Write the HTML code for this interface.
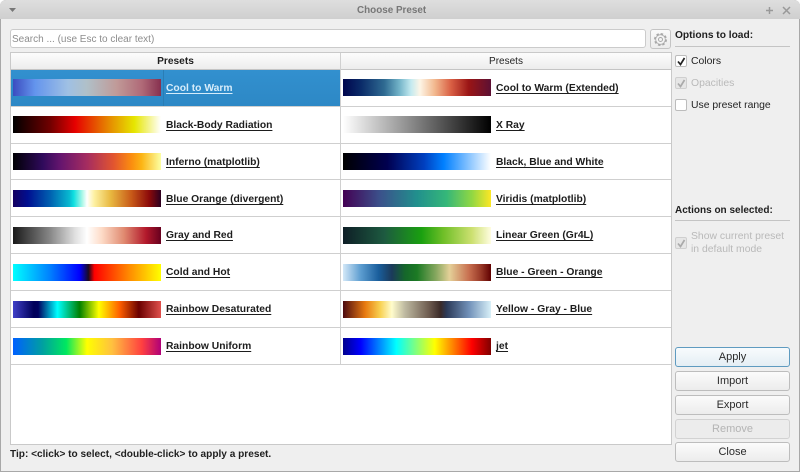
<!DOCTYPE html>
<html><head><meta charset="utf-8"><style>
html,body{margin:0;padding:0;width:800px;height:472px;overflow:hidden;background:#fff}
*{box-sizing:border-box}
body{font-family:"Liberation Sans","Noto Sans CJK SC",sans-serif;font-size:11px;color:#232323}
div{position:absolute}
.win{left:0;top:0;width:800px;height:472px;background:#efefef;border:1px solid #a8a8a8;border-top-color:#8f8f8f;border-radius:6px 6px 0 0;overflow:hidden}
.title{left:0;top:0;width:800px;height:19px;background:linear-gradient(#dedede,#cfcfcf)}
.tt{left:357px;top:4px;font-weight:bold;font-size:9.9px;color:#777;line-height:14px;white-space:nowrap}
.line{background:#cfcfcf;height:1px}
.bar{width:148px;height:17px}
.l{left:13px}.r{left:343px}
.n{font-size:10.3px;font-weight:bold;text-decoration:underline;text-decoration-thickness:1px;text-underline-offset:2px;line-height:14px;white-space:nowrap;color:#1d1d1d}
.nl{left:166px}.nr{left:496px}
.btn{left:675px;width:115px;height:20px;border:1px solid #bdbdbd;border-radius:3px;background:linear-gradient(#fbfbfb,#ececec);text-align:center;line-height:18px;font-size:11px;color:#2a2a2a}
.cb{left:675px;width:12px;height:12px;border:1px solid #bcbcbc;border-radius:2px;background:#fff}
.lab{left:691px;font-size:10.4px;line-height:14px;white-space:nowrap}
.dis{color:#b9b9b9}
.h{font-size:10.2px;font-weight:bold;line-height:14px;white-space:nowrap;color:#1f1f1f}
svg{position:absolute;overflow:visible}
</style></head><body>
<div class="win"></div>
<div class="title" style="border-radius:6px 6px 0 0"></div>
<div class="tt">Choose Preset</div>
<svg style="left:9px;top:8px" width="8" height="5"><path d="M0 0H7L3.500 4Z" fill="#777"/></svg>
<svg style="left:765px;top:6px" width="30" height="9"><path d="M1 4.500H8M4.500 1V8" stroke="#999" stroke-width="1.500" fill="none"/><path d="M18 1L25 8M25 1L18 8" stroke="#999" stroke-width="1.500" fill="none"/></svg>

<div style="left:10px;top:29px;width:636px;height:19px;background:#fff;border:1px solid #cbcbcb;border-radius:3px"></div>
<div style="left:12px;top:33px;font-size:10px;line-height:14px;color:#8d8d8d;white-space:nowrap">Search ... (use Esc to clear text)</div>
<div style="left:650px;top:29px;width:21px;height:20px;border:1px solid #c4c4c4;border-radius:3px;background:linear-gradient(#fafafa,#ececec)"></div>
<svg style="left:653px;top:32px" width="15" height="15" viewBox="0 0 15 15"><circle cx="7.500" cy="7.500" r="5.400" fill="none" stroke="#a8a8a8" stroke-width="2.200" stroke-dasharray="2.400 1.840"/><circle cx="7.500" cy="7.500" r="4.800" fill="#f4f4f4" stroke="#a8a8a8" stroke-width=".8"/><circle cx="7.500" cy="7.500" r="2" fill="none" stroke="#a8a8a8"/></svg>

<div style="left:10px;top:52px;width:662px;height:393px;background:#fff;border:1px solid #c9c9c9"></div>
<div style="left:11px;top:53px;width:660px;height:16px;background:linear-gradient(#fcfcfc,#ededed)"></div>
<div class="line" style="left:11px;top:69px;width:660px;background:#c4c4c4"></div>
<div style="left:340px;top:53px;width:1px;height:311px;background:#d0d0d0"></div>
<div class="h" style="left:11px;width:329px;top:55px;text-align:center">Presets</div>
<div style="left:341px;width:330px;top:55px;text-align:center;line-height:14px;font-size:10px">Presets</div>

<div style="left:11px;top:70px;width:329px;height:36px;background:linear-gradient(#3290cf,#2d88c5)"></div>
<div style="left:163px;top:70px;width:1px;height:36px;background:#2a7db5"></div>
<div class="line" style="left:11px;top:106px;width:660px"></div>
<div class="line" style="left:11px;top:143px;width:660px"></div>
<div class="line" style="left:11px;top:179px;width:660px"></div>
<div class="line" style="left:11px;top:216px;width:660px"></div>
<div class="line" style="left:11px;top:253px;width:660px"></div>
<div class="line" style="left:11px;top:290px;width:660px"></div>
<div class="line" style="left:11px;top:327px;width:660px"></div>
<div class="line" style="left:11px;top:364px;width:660px"></div>

<div class="bar l" style="top:79px;background:linear-gradient(90deg,#3b4cc0,#6495ed 15%,#9fc0e4 37%,#b0c0c8 50%,#c09a98 70%,#b06a78 87%,#86304f)"></div>
<div class="n nl" style="top:82px;color:#d6ecfa">Cool to Warm</div>
<div class="bar r" style="top:79px;background:linear-gradient(90deg,#00064d,#0a2a68 12%,#2f6b92 28%,#72b3c8 38%,#c4eaf0 46%,#fdf5e6 52%,#f2b88e 62%,#d95f44 73%,#9a1515 85%,#5c1034)"></div>
<div class="n nr" style="top:82px">Cool to Warm (Extended)</div>

<div class="bar l" style="top:116px;background:linear-gradient(90deg,#000,#700000 25%,#e60000 42%,#e68a00 65%,#e6e600 82%,#fff)"></div>
<div class="n nl" style="top:119px">Black-Body Radiation</div>
<div class="bar r" style="top:116px;background:linear-gradient(90deg,#fff,#000)"></div>
<div class="n nr" style="top:119px">X Ray</div>

<div class="bar l" style="top:153px;background:linear-gradient(90deg,#000004,#2f0a5b 20%,#65156e 32%,#a52c60 50%,#e2552f 68%,#fb8d0f 80%,#fcb514 87%,#fcffa4)"></div>
<div class="n nl" style="top:156px">Inferno (matplotlib)</div>
<div class="bar r" style="top:153px;background:linear-gradient(90deg,#000,#000050 30%,#0040c0 55%,#0080ff 68%,#fff)"></div>
<div class="n nr" style="top:156px">Black, Blue and White</div>

<div class="bar l" style="top:190px;background:linear-gradient(90deg,#150060,#000f90 10%,#0060b0 25%,#08b8d0 38%,#0fe0e0 41%,#b0f8e8 47%,#fff 50%,#fdf0a0 55%,#e8b840 66%,#c85a18 80%,#8c0a0a 92%,#2c0020)"></div>
<div class="n nl" style="top:193px">Blue Orange (divergent)</div>
<div class="bar r" style="top:190px;background:linear-gradient(90deg,#440154,#3b518b 25%,#21908d 50%,#35b779 70%,#90d743 87%,#fde725)"></div>
<div class="n nr" style="top:193px">Viridis (matplotlib)</div>

<div class="bar l" style="top:227px;background:linear-gradient(90deg,#1a1a1a,#878787 25%,#e0e0e0 42%,#fff 50%,#fddbc7 60%,#e08a70 75%,#b2182b 90%,#67001f)"></div>
<div class="n nl" style="top:229px">Gray and Red</div>
<div class="bar r" style="top:227px;background:linear-gradient(90deg,#0e1e26,#1d5a40 28%,#1aa010 53%,#70bf28 68%,#cce070 87%,#fffde0)"></div>
<div class="n nr" style="top:229px">Linear Green (Gr4L)</div>

<div class="bar l" style="top:264px;background:linear-gradient(90deg,#0ff,#0080ff 25%,#00f 45%,#1a0a20 51%,#f00 55%,#f80 78%,#ff0)"></div>
<div class="n nl" style="top:266px">Cold and Hot</div>
<div class="bar r" style="top:264px;background:linear-gradient(90deg,#d4e8f8,#5c9dd0 12%,#1a5e9c 24%,#1b3a5a 33%,#15672a 42%,#1c7a24 50%,#88a860 63%,#e4d098 72%,#c87050 85%,#9a3a28 93%,#600000)"></div>
<div class="n nr" style="top:266px">Blue - Green - Orange</div>

<div class="bar l" style="top:301px;background:linear-gradient(90deg,#4040c8,#00005a 14%,#000060 17%,#00ffff 30%,#008000 45%,#ffff00 58%,#ff6000 72%,#6b0000 85%,#e0504c)"></div>
<div class="n nl" style="top:303px">Rainbow Desaturated</div>
<div class="bar r" style="top:301px;background:linear-gradient(90deg,#4c0a10,#e87a10 15%,#f8d050 25%,#fffccc 33%,#bdb8a0 42%,#6e5c50 58%,#3a2a28 66%,#2c3a58 70%,#7090b8 85%,#d8f0f8)"></div>
<div class="n nr" style="top:303px">Yellow - Gray - Blue</div>

<div class="bar l" style="top:338px;background:linear-gradient(90deg,#0060ff,#00a0a0 20%,#00e860 36%,#ffff00 50%,#ffc040 67%,#ff4040 87%,#b00078)"></div>
<div class="n nl" style="top:340px">Rainbow Uniform</div>
<div class="bar r" style="top:338px;background:linear-gradient(90deg,#00008f,#00f 12%,#0ff 36%,#ff0 62%,#f00 87%,#800000)"></div>
<div class="n nr" style="top:340px">jet</div>

<div class="h" style="left:10px;top:448px;font-size:10.1px">Tip: &lt;click&gt; to select, &lt;double-click&gt; to apply a preset.</div>

<div class="h" style="left:675px;top:29px">Options to load:</div>
<div class="line" style="left:675px;top:46px;width:115px;background:#c4c4c4"></div>
<div class="cb" style="top:55px"></div>
<svg style="left:677px;top:57px" width="9" height="9"><path d="M1 4.500L3.500 7.500L7.500 1" stroke="#222" stroke-width="1.700" fill="none"/></svg>
<div class="lab" style="top:55px">Colors</div>
<div class="cb" style="top:77px;background:#e6e6e6;border-color:#cfcfcf"></div>
<svg style="left:677px;top:79px" width="9" height="9"><path d="M1 4.500L3.500 7.500L7.500 1" stroke="#aaa" stroke-width="1.700" fill="none"/></svg>
<div class="lab dis" style="top:77px">Opacities</div>
<div class="cb" style="top:99px"></div>
<div class="lab" style="top:99px">Use preset range</div>

<div class="h" style="left:675px;top:204px;font-size:10px">Actions on selected:</div>
<div class="line" style="left:675px;top:220px;width:115px;background:#c4c4c4"></div>
<div class="cb" style="top:237px;background:#e6e6e6;border-color:#cfcfcf"></div>
<svg style="left:677px;top:239px" width="9" height="9"><path d="M1 4.500L3.500 7.500L7.500 1" stroke="#aaa" stroke-width="1.700" fill="none"/></svg>
<div class="lab dis" style="top:230px;line-height:13px">Show current preset<br>in default mode</div>

<div class="btn" style="top:347px;border-color:#5f9bc0;background:linear-gradient(#f8fbfd,#e4eef4)">Apply</div>
<div class="btn" style="top:371px">Import</div>
<div class="btn" style="top:395px">Export</div>
<div class="btn dis" style="top:419px;background:#ececec;border-color:#d2d2d2;color:#b4b4b4">Remove</div>
<div class="btn" style="top:442px">Close</div>
</body></html>
